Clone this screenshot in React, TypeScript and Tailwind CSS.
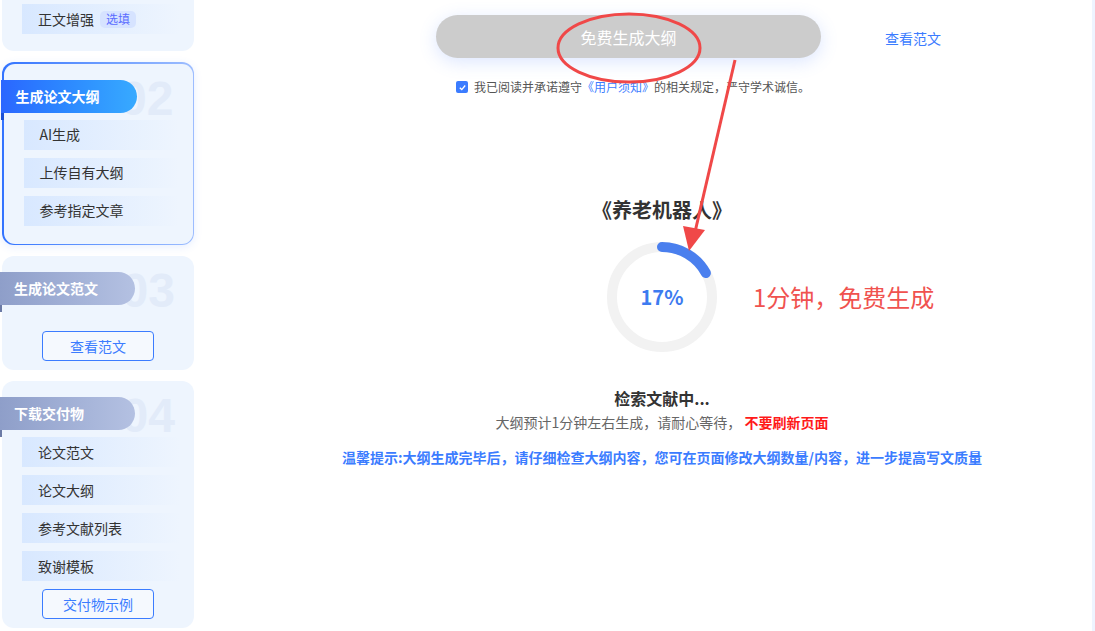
import React from 'react';

const FONT = "font-['Noto_Sans_CJK_SC','Liberation_Sans',sans-serif]";

function Badge({ label, active }: { label: string; active?: boolean }) {
  return (
    <div
      className={`relative z-10 -ml-[3px] w-[136px] h-[33px] rounded-r-full flex items-center pl-[15px] text-white font-bold text-[14px] ${
        active
          ? 'bg-gradient-to-r from-[#2b66ff] to-[#38aaff]'
          : 'bg-gradient-to-r from-[#8e9ec9] to-[#b4c1e2]'
      }`}
    >
      {label}
      <div className={`absolute left-0 top-full w-[3px] h-[7px] ${active ? 'bg-[#1a4fd6]' : 'bg-[#6b7aa5]'}`} />
    </div>
  );
}

function StepNo({ n }: { n: string }) {
  return (
    <div className="absolute right-[19px] top-[11px] text-[48px] leading-none font-bold text-[#e2ebf9] font-['Liberation_Sans',sans-serif]">
      {n}
    </div>
  );
}

function Item({ label, children }: { label: string; children?: React.ReactNode }) {
  return (
    <div className="ml-[20px] mr-[14px] h-[30px] flex items-center pl-[16px] text-[14px] text-[#333] bg-gradient-to-r from-[#d8e8ff] to-[#eef5fe]">
      {label}
      {children}
    </div>
  );
}

function OutlineButton({ label }: { label: string }) {
  return (
    <div className="mx-auto w-[112px] h-[30px] flex items-center justify-center border border-[#3b7cff] rounded-[4px] text-[14px] text-[#3b7cff] bg-white/40">
      {label}
    </div>
  );
}

function Sidebar() {
  return (
    <aside className="w-[196px] pl-[2px] flex flex-col gap-[11px] shrink-0">
      {/* 正文增强 (scrolled, top cut off) */}
      <div className="w-[192px] h-[51px] rounded-b-xl bg-[#eef5fe] pt-[4px]">
        <Item label="正文增强">
          <span className="ml-[6px] px-[6px] h-[17px] flex items-center rounded-[5px] bg-[#d6e3ff] text-[12px] text-[#5a6cff]">
            选填
          </span>
        </Item>
      </div>

      {/* 02 */}
      <div className="w-[192px] h-[183px] rounded-xl p-[1.5px] bg-gradient-to-r from-[#3273ff] to-[#9dbdff] shadow-[0_2px_8px_rgba(60,120,255,0.12)]">
        <div className="relative h-full rounded-[11px] bg-[#eef5fe] pt-[16px]">
          <StepNo n="02" />
          <Badge label="生成论文大纲" active />
          <div className="mt-[7px] flex flex-col gap-[8px]">
            <Item label="AI生成" />
            <Item label="上传自有大纲" />
            <Item label="参考指定文章" />
          </div>
        </div>
      </div>

      {/* 03 */}
      <div className="relative w-[192px] h-[114px] rounded-xl bg-[#eef5fe] pt-[16px]">
        <StepNo n="03" />
        <Badge label="生成论文范文" />
        <div className="mt-[26px]">
          <OutlineButton label="查看范文" />
        </div>
      </div>

      {/* 04 */}
      <div className="relative w-[192px] h-[247px] rounded-xl bg-[#eef5fe] pt-[16px]">
        <StepNo n="04" />
        <Badge label="下载交付物" />
        <div className="mt-[7px] flex flex-col gap-[8px]">
          <Item label="论文范文" />
          <Item label="论文大纲" />
          <Item label="参考文献列表" />
          <Item label="致谢模板" />
        </div>
        <div className="mt-[8px]">
          <OutlineButton label="交付物示例" />
        </div>
      </div>
    </aside>
  );
}

function Ring({ percent }: { percent: number }) {
  const c = 2 * Math.PI * 50;
  return (
    <svg width="110" height="110" viewBox="0 0 110 110">
      <circle cx="55" cy="55" r="50" fill="none" stroke="#f2f2f2" strokeWidth="10" />
      <circle
        cx="55"
        cy="55"
        r="50"
        fill="none"
        stroke="#4a7fee"
        strokeWidth="10"
        strokeLinecap="round"
        strokeDasharray={`${(c * percent) / 100} ${c}`}
        transform="rotate(-90 55 55)"
      />
    </svg>
  );
}

function Main() {
  return (
    <main className="flex-1 pl-[36px]">
      <div className="flex items-center pt-[15px]">
        <div className="ml-[204px] w-[385px] h-[43px] rounded-full bg-[#cccccc] text-white text-[16px] flex items-center justify-center shadow-[0_4px_18px_rgba(80,130,255,0.2)]">
          免费生成大纲
        </div>
        <a className="ml-[64px] mt-[4px] text-[14px] text-[#3b7cff]">查看范文</a>
      </div>

      <div className="ml-[224px] mt-[19px] h-[20px] flex items-center text-[12px] text-[#555]">
        <span className="w-[12px] h-[12px] rounded-[2px] bg-[#3b7cff] flex items-center justify-center mr-[6px]">
          <svg width="9" height="9" viewBox="0 0 10 10">
            <polyline points="2,5.2 4.2,7.3 8,2.8" fill="none" stroke="#fff" strokeWidth="1.5" />
          </svg>
        </span>
        我已阅读并承诺遵守<span className="text-[#3b7cff]">《用户须知》</span>的相关规定，严守学术诚信。
      </div>

      <div className="flex flex-col items-center mt-[101px]">
        <div className="text-[20px] leading-[24px] font-bold text-[#333]">《养老机器人》</div>
        <div className="relative mt-[20px]">
          <Ring percent={17} />
          <div className="absolute inset-0 flex items-center justify-center text-[20px] font-bold text-[#3d7bf0]">
            17%
          </div>
          <div className="absolute left-full top-1/2 -translate-y-1/2 ml-[36px] whitespace-nowrap text-[24px] text-[#f0524f]">
            1分钟，免费生成
          </div>
        </div>
        <div className="mt-[35px] text-[16px] leading-[22px] font-bold text-[#333]">检索文献中...</div>
        <div className="mt-[3px] text-[14px] leading-[20px] text-[#666]">
          大纲预计1分钟左右生成，请耐心等待， <span className="text-[#ff1a1a] font-bold">不要刷新页面</span>
        </div>
        <div className="mt-[15px] text-[14px] leading-[20px] font-bold text-[#3b7cff]">
          温馨提示:大纲生成完毕后，请仔细检查大纲内容，您可在页面修改大纲数量/内容，进一步提高写文质量
        </div>
      </div>
    </main>
  );
}

export default function App() {
  return (
    <div className={`relative w-[1095px] h-[631px] overflow-hidden bg-white flex ${FONT}`}>
      <Sidebar />
      <Main />
      <div className="w-[3px] bg-[#eef4ff] shrink-0" />

      {/* red annotation overlay */}
      <svg className="absolute inset-0 pointer-events-none" width="1095" height="631" viewBox="0 0 1095 631">
        <ellipse cx="629" cy="48" rx="71" ry="34" fill="none" stroke="#f04848" strokeWidth="3" />
        <line x1="735" y1="60" x2="695" y2="232" stroke="#f04848" strokeWidth="3" />
        <polygon points="689,251 683,226 705,230" fill="#f04848" />
      </svg>
    </div>
  );
}
